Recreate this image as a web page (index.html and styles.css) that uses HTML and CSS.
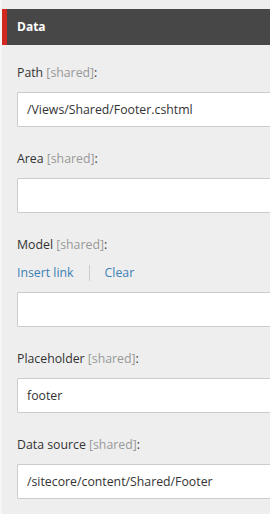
FILE: index.html
```html
<!DOCTYPE html>
<html lang="en">
<head>
  <meta charset="UTF-8">
  <meta name="viewport" content="width=device-width, initial-scale=1.0">
  <title>Data</title>
  <link rel="stylesheet" href="styles.css">
</head>
<body>
  <div class="panel">
    <div class="section-header">Data</div>
    <div class="fields">
      <div class="field">
        <label class="field-label">Path <span class="shared">[shared]</span>:</label>
        <input class="field-input" type="text" value="/Views/Shared/Footer.cshtml">
      </div>
      <div class="field">
        <label class="field-label">Area <span class="shared">[shared]</span>:</label>
        <input class="field-input" type="text" value="">
      </div>
      <div class="field">
        <label class="field-label">Model <span class="shared">[shared]</span>:</label>
        <div class="field-links">
          <a href="#" class="field-link">Insert link</a>
          <span class="link-sep"></span>
          <a href="#" class="field-link">Clear</a>
        </div>
        <input class="field-input" type="text" value="">
      </div>
      <div class="field">
        <label class="field-label">Placeholder <span class="shared">[shared]</span>:</label>
        <input class="field-input" type="text" value="footer">
      </div>
      <div class="field">
        <label class="field-label">Data source <span class="shared">[shared]</span>:</label>
        <input class="field-input" type="text" value="/sitecore/content/Shared/Footer">
      </div>
    </div>
  </div>
</body>
</html>
```

FILE: styles.css
```css
html, body {
  margin: 0;
  padding: 0;
  background: #eeeeee;
  overflow: hidden;
}

body {
  font-family: "Open Sans", "Noto Sans", sans-serif;
  font-size: 12.3px;
  color: #333333;
}

.panel {
  border-left: 2px solid #f6f6f6;
  padding-top: 9px;
  min-height: 505px;
}

.section-header {
  height: 36px;
  line-height: 36px;
  background: #474747;
  border-left: 5px solid #d0281f;
  color: #ffffff;
  font-weight: bold;
  font-size: 12px;
  padding-left: 10px;
}

.fields {
  padding: 19px 0 0 15px;
}

.field {
  margin-bottom: 23px;
}

.field-label {
  display: block;
  line-height: 18px;
  margin-bottom: 10px;
}

.shared {
  color: #999999;
}

.field-links {
  display: flex;
  align-items: center;
  line-height: 18px;
  margin-bottom: 10px;
}

.field-link {
  color: #3c80b4;
  text-decoration: none;
}

.link-sep {
  width: 1px;
  height: 16px;
  background: #cccccc;
  margin: 0 15px 0 15px;
}

.field-input {
  display: block;
  box-sizing: border-box;
  width: 100%;
  height: 35px;
  margin: 0;
  padding: 0 9px;
  border: 1px solid #cccccc;
  border-right: none;
  border-radius: 2px 0 0 2px;
  background: #ffffff;
  font-family: inherit;
  font-size: 12.3px;
  color: #333333;
  outline: none;
}
```
